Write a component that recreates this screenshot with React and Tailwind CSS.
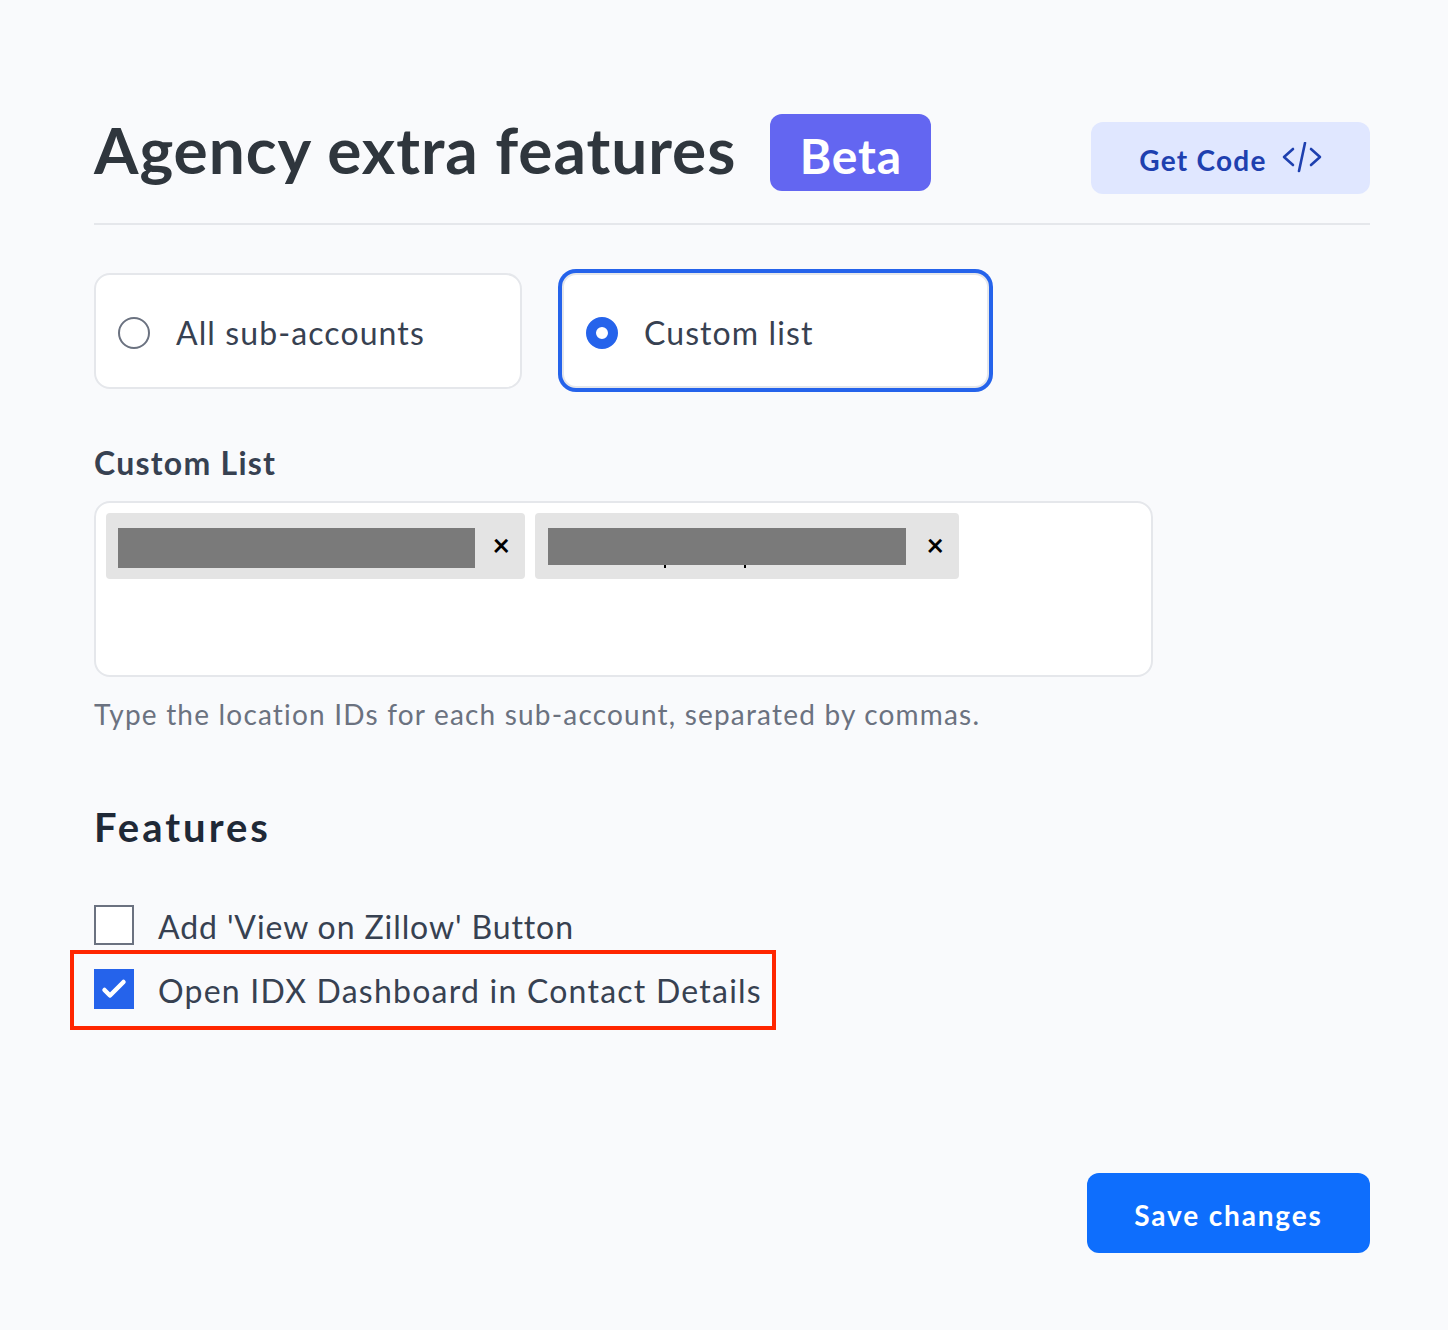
import React from "react";

const font = { fontFamily: "Lato, sans-serif" };

const RadioCard = ({ label, checked }) => (
  <div
    className={
      checked
        ? "w-[427px] h-[115px] rounded-[14px] border-2 border-[#e5e7eb] ring-4 ring-[#2563eb] bg-white flex items-center pl-[22px] pt-[5px] gap-[26px]"
        : "w-[428px] h-[116px] rounded-[16px] border-2 border-[#e5e7eb] bg-white flex items-center pl-[22px] pt-[3px] gap-[26px]"
    }
  >
    {checked ? (
      <span className="w-[32px] h-[32px] rounded-full border-[10px] border-[#2563eb] bg-white" />
    ) : (
      <span className="w-[32px] h-[32px] rounded-full border-2 border-[#6b7280] bg-white" />
    )}
    <span className="text-[32px] leading-[40px] tracking-[1.1px] text-[#374151]">{label}</span>
  </div>
);

const Chip = ({ width, barClass, marks }) => (
  <div className={`${width} h-[66px] rounded-[4px] bg-[#e4e4e4] flex items-start justify-between pr-[15px] relative`}>
    <div className={`${barClass} mt-[15px] bg-[#7a7a7a]`} />
    <span className="text-[30px] leading-[62px] font-bold text-black">×</span>
    {marks && (
      <>
        <span className="absolute left-[129px] top-[52px] w-[2px] h-[3px] bg-black" />
        <span className="absolute left-[209px] top-[52px] w-[2px] h-[3px] bg-black" />
      </>
    )}
  </div>
);

export default function App() {
  return (
    <div className="min-h-[1330px] bg-[#f9fafc] pl-[94px] pr-[78px] pt-[114px] relative" style={font}>
      <div className="flex items-start justify-between h-[111px] border-b-2 border-[#e5e7eb]">
        <div className="flex items-start gap-[34px]">
          <h1 className="text-[64px] leading-[72px] tracking-[0.95px] font-bold text-[#2f363d]">Agency extra features</h1>
          <span className="w-[161px] h-[77px] rounded-[12px] bg-[#6366f1] text-white text-[48px] tracking-[0.8px] font-bold leading-[84px] text-center">
            Beta
          </span>
        </div>
        <button className="mt-[8px] w-[279px] h-[72px] rounded-[12px] bg-[#e0e7ff] text-[#1e40af] flex items-center justify-center gap-[15px]">
          <span className="text-[28px] font-bold leading-[36px] tracking-[1.25px] pt-[4px]">Get Code</span>
          <svg width="40" height="32" viewBox="0 0 40 32" fill="none" stroke="#1e40af" strokeWidth="2.6" strokeLinecap="round" strokeLinejoin="round">
            <path d="M11 7 2 15l9 8" />
            <path d="M29 7l9 8-9 8" />
            <path d="M23 1l-6 28" />
          </svg>
        </button>
      </div>

      <div className="flex gap-[40px] mt-[48px] h-[116px]">
        <RadioCard label="All sub-accounts" />
        <RadioCard label="Custom list" checked />
      </div>

      <div className="mt-[54px] text-[32px] leading-[40px] tracking-[1.25px] font-bold text-[#374151]">Custom List</div>
      <div className="mt-[18px] w-[1059px] h-[176px] rounded-[16px] border-2 border-[#e5e7eb] bg-white pt-[10px] pl-[10px] flex items-start gap-[10px]">
        <Chip width="w-[419px]" barClass="w-[357px] h-[40px] ml-[12px]" />
        <Chip width="w-[424px]" barClass="w-[358px] h-[37px] ml-[13px]" marks />
      </div>
      <p className="mt-[17px] text-[28px] leading-[40px] tracking-[1.19px] text-[#6b7280]">
        Type the location IDs for each sub-account, separated by commas.
      </p>

      <h2 className="mt-[69px] text-[40px] leading-[48px] tracking-[3px] font-bold text-[#1f2937]">Features</h2>

      <div className="mt-[54px] flex flex-col gap-[24px]">
        <div className="flex items-center gap-[24px] h-[40px]">
          <span className="w-[40px] h-[40px] border-2 border-[#6b7280] bg-white" />
          <span className="text-[32px] leading-[40px] tracking-[0.9px] text-[#374151] pt-[4px]">Add 'View on Zillow' Button</span>
        </div>
        <div className="flex items-center gap-[24px] h-[40px]">
          <span className="w-[40px] h-[40px] bg-[#2563eb]">
            <svg width="40" height="40" viewBox="0 0 40 40" fill="none" stroke="#fff" strokeWidth="4.5" strokeLinecap="round" strokeLinejoin="round">
              <path d="M10.5 21l5.5 5.5L29.5 13" />
            </svg>
          </span>
          <span className="text-[32px] leading-[40px] tracking-[1.23px] text-[#374151] pt-[4px]">Open IDX Dashboard in Contact Details</span>
        </div>
      </div>

      <div className="flex justify-end mt-[164px]">
        <button className="w-[283px] h-[80px] rounded-[12px] bg-[#0e6efd] text-white text-[28px] tracking-[1.85px] font-bold pt-[3px]">Save changes</button>
      </div>

      {/* red annotation box */}
      <div className="absolute left-[70px] top-[950px] w-[706px] h-[80px] border-4 border-[#ff2600]" />
    </div>
  );
}
